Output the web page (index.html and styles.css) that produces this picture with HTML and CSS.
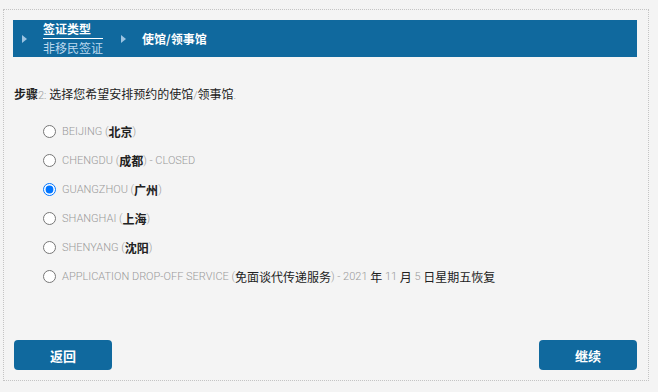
FILE: index.html
```html
<!DOCTYPE html>
<html lang="zh-CN">

<head>
    <meta charset="UTF-8">
    <meta name="viewport" content="width=device-width, initial-scale=1.0">
    <title>选择使馆/领事馆</title>
    <link rel="stylesheet" href="styles.css">
</head>

<body>
    <div class="page-frame">
        <!-- Breadcrumb bar -->
        <div class="crumbs">
            <div class="crumb">
                <span class="crumb-arrow"></span>
                <div class="crumb-stack">
                    <div class="crumb-title">签证类型</div>
                    <div class="crumb-sub">非移民签证</div>
                </div>
            </div>
            <div class="crumb">
                <span class="crumb-arrow"></span>
                <div class="crumb-title single">使馆/领事馆</div>
            </div>
        </div>

        <!-- Step text -->
        <div class="step">
            <b>步骤</b><span class="lat">2:</span> 选择您希望安排预约的使馆<span class="lat">/</span>领事馆<span class="lat">.</span>
        </div>

        <!-- Post list -->
        <div class="post-list">
            <label class="post-row">
                <input type="radio" name="post">
                <span class="lat">BEIJING (</span><b>北京</b><span class="lat">)</span>
            </label>
            <label class="post-row">
                <input type="radio" name="post">
                <span class="lat">CHENGDU (</span><b>成都</b><span class="lat">) - CLOSED</span>
            </label>
            <label class="post-row">
                <input type="radio" name="post" checked>
                <span class="lat">GUANGZHOU (</span><b>广州</b><span class="lat">)</span>
            </label>
            <label class="post-row">
                <input type="radio" name="post">
                <span class="lat">SHANGHAI (</span><b>上海</b><span class="lat">)</span>
            </label>
            <label class="post-row">
                <input type="radio" name="post">
                <span class="lat">SHENYANG (</span><b>沈阳</b><span class="lat">)</span>
            </label>
            <label class="post-row">
                <input type="radio" name="post">
                <span class="lat">APPLICATION DROP-OFF SERVICE (</span><span class="cn">免面谈代传递服务</span><span class="lat">) - 2021 </span><span class="cn">年 </span><span class="lat">11 </span><span class="cn">月 </span><span class="lat">5 </span><span class="cn">日星期五恢复</span>
            </label>
        </div>

        <!-- Buttons -->
        <div class="actions">
            <button class="btn">返回</button>
            <button class="btn">继续</button>
        </div>
    </div>
</body>

</html>
```

FILE: styles.css
```css
body {
    margin: 0;
    background-color: #f4f4f4;
    font-family: "Noto Sans CJK SC", "Liberation Sans", sans-serif;
    font-size: 12px;
    color: #222;
}

.page-frame {
    box-sizing: border-box;
    width: 646px;
    height: 372px;
    margin: 9px 0 0 3px;
    padding: 10px 11px 10px 9px;
    border: 1px dotted #c4c4c4;
    display: flex;
    flex-direction: column;
}

.crumbs {
    background-color: #10699e;
    height: 37px;
    display: flex;
    align-items: center;
    padding-left: 9px;
    gap: 18px;
}

.crumb {
    display: flex;
    align-items: center;
}

.crumb-arrow {
    width: 0;
    height: 0;
    border-top: 4px solid transparent;
    border-bottom: 4px solid transparent;
    border-left: 5px solid #9cc4e2;
    margin-right: 16px;
    margin-top: 1px;
}

.crumb-stack {
    display: flex;
    flex-direction: column;
}

.crumb-title {
    color: #fff;
    font-weight: bold;
    line-height: 15px;
    padding-bottom: 2px;
    border-bottom: 1px solid #fff;
}

.crumb-title.single {
    border-bottom: none;
    padding-bottom: 0;
}

.crumb-sub {
    color: #bcd9ef;
    line-height: 16px;
    margin-top: 1px;
}

.step {
    margin-top: 29px;
    margin-left: 1px;
    line-height: 16px;
}

.lat {
    font-family: Roboto, "Liberation Sans", sans-serif;
    font-weight: 300;
    font-size: 11px;
    color: #9a9a9a;
}

.post-list {
    margin-top: 13px;
    padding-left: 30px;
}

.post-row {
    display: flex;
    align-items: center;
    height: 29px;
    white-space: pre;
}

.post-row input {
    width: 13px;
    height: 13px;
    margin: 0 6px 0 0;
}

.post-row b {
    font-weight: bold;
    color: #222;
}

.cn {
    color: #222;
}

.actions {
    margin-top: auto;
    display: flex;
    justify-content: space-between;
    padding-left: 1px;
}

.btn {
    width: 98px;
    height: 30px;
    border: none;
    border-radius: 4px;
    background-color: #10699e;
    color: #fff;
    font-family: "Noto Sans CJK SC", sans-serif;
    font-size: 13px;
    font-weight: bold;
}
```
